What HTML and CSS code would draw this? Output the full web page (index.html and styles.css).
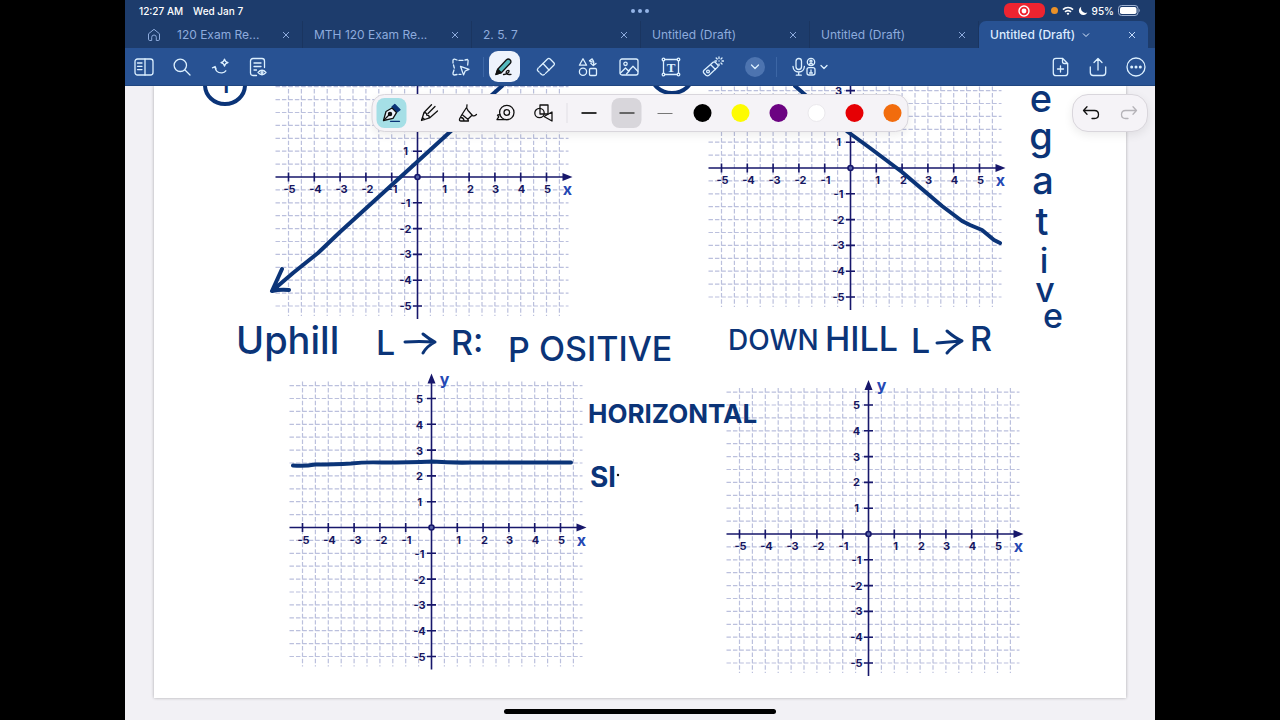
FILE: index.html
```html
<!DOCTYPE html>
<html lang="en">
<head>
	<meta charset="UTF-8">
	<meta name="viewport" content="width=device-width, initial-scale=1.0">
	<title>Untitled (Draft)</title>
	<link rel="stylesheet" href="styles.css">
</head>
<body>
<div class="tablet">
	<header class="top">
		<div class="status">
			<div class="clock"><span>12:27 AM</span><span>Wed Jan 7</span></div>
			<div class="dots"><i></i><i></i><i></i></div>
			<div class="system">
				<span class="recording"><svg width="12" height="12" viewBox="0 0 12 12"><circle cx="6" cy="6" r="5" fill="none" stroke="#fff" stroke-width="1.4"/><circle cx="6" cy="6" r="2.4" fill="#fff"/></svg></span>
				<span class="mic-dot"></span>
				<svg width="12" height="10" viewBox="0 0 12 10" fill="none" stroke="#fff" stroke-width="1.7"><path d="M1 3.6a7 7 0 0 1 10 0M3 5.9a4.200 4.200 0 0 1 6 0"/><path d="M4.600 7.500L6 9.200l1.400-1.700a2 2 0 0 0-2.800 0z" fill="#fff" stroke="none"/></svg>
				<svg width="10" height="10" viewBox="0 0 10 10"><path d="M3.300.8A4.400 4.400 0 1 0 9.300 6.600 4.600 4.600 0 0 1 3.300.8z" fill="#fff"/></svg>
				<span>95%</span>
				<svg width="23" height="11" viewBox="0 0 23 11"><rect x=".5" y=".5" width="19.500" height="10" rx="3" fill="none" stroke="#9fb2d2"/><rect x="2" y="2" width="16.500" height="7" rx="1.800" fill="#fff"/><path d="M21.300 4v3c1-.4 1-2.600 0-3z" fill="#9fb2d2"/></svg>
			</div>
		</div>
		<nav class="tabs">
			<button class="home" aria-label="Home"><svg width="14" height="14" viewBox="0 0 14 14"><path d="M1.500 5.800L7 1.300l5.500 4.500v5.400q0 1.300-1.300 1.300H9.300V9.300a2.300 2.300 0 0 0-4.600 0v3.200H2.800q-1.300 0-1.300-1.300z"/></svg></button>
			<div class="tab"><a href="#">120 Exam Re...</a><button class="close" aria-label="Close tab"><svg width="8" height="8" viewBox="0 0 8 8"><path d="M1 1l6 6M7 1L1 7"/></svg></button></div>
			<div class="tab"><a href="#">MTH 120 Exam Re...</a><button class="close" aria-label="Close tab"><svg width="8" height="8" viewBox="0 0 8 8"><path d="M1 1l6 6M7 1L1 7"/></svg></button></div>
			<div class="tab"><a href="#">2. 5. 7</a><button class="close" aria-label="Close tab"><svg width="8" height="8" viewBox="0 0 8 8"><path d="M1 1l6 6M7 1L1 7"/></svg></button></div>
			<div class="tab"><a href="#">Untitled (Draft)</a><button class="close" aria-label="Close tab"><svg width="8" height="8" viewBox="0 0 8 8"><path d="M1 1l6 6M7 1L1 7"/></svg></button></div>
			<div class="tab"><a href="#">Untitled (Draft)</a><button class="close" aria-label="Close tab"><svg width="8" height="8" viewBox="0 0 8 8"><path d="M1 1l6 6M7 1L1 7"/></svg></button></div>
			<div class="tab active"><a href="#">Untitled (Draft) <svg width="8" height="6" viewBox="0 0 8 6"><path d="M1 1.500l3 3 3-3"/></svg></a><button class="close" aria-label="Close tab"><svg width="8" height="8" viewBox="0 0 8 8"><path d="M1 1l6 6M7 1L1 7"/></svg></button></div>
		</nav>
	</header>

	<div class="toolbar">
		<div class="group">
			<button aria-label="Sidebar"><svg width="20" height="18" viewBox="0 0 20 18"><rect x="1" y="1" width="18" height="16" rx="2.500"/><path d="M11 1v16M3.500 5h4.500M3.500 8.300h4.500M3.500 11.600h4.500"/></svg></button>
			<button aria-label="Search"><svg width="18" height="18" viewBox="0 0 18 18"><circle cx="7.300" cy="7.300" r="6.200"/><path d="M12 12l5 5"/></svg></button>
			<button aria-label="Assistant"><svg width="18" height="18" viewBox="0 0 18 18"><path d="M13.500 1.200q.6 2.900 3.500 3.500-2.900.6-3.500 3.500-.6-2.900-3.500-3.500 2.900-.6 3.500-3.500zM1.500 9.800l2.600-1.300 1 2.600M4 9c.5 4 3.500 6 7 5.800 1.800-.2 3-.9 3.800-2"/></svg></button>
			<button aria-label="Page view"><svg width="18" height="20" viewBox="0 0 18 20"><path d="M7.500 18.500H4q-2.500 0-2.500-2.500V4Q1.500 1.500 4 1.500h9q2.500 0 2.500 2.500v6.500M5 6h7M5 9.500h7M5 13h2.500"/><path d="M9 15.500q4-4.500 8 0-4 4.500-8 0z"/><circle cx="13" cy="15.500" r=".9"/></svg></button>
		</div>
		<div class="middle">
			<button aria-label="Lasso"><svg width="20" height="20" viewBox="0 0 20 20"><path d="M2 6V3.500Q2 2 3.500 2.200L6 3M8 3.400h4M14 3l2.500-.5Q17.500 3 17 5l-.3 3M2.500 8l.8 3M3 13l-1 3q-.2 2 1.500 2l2.500-.5M8 17.300h2"/><path d="M9.500 9.300l8.500 3-3.800 1.700-1.700 3.900z"/></svg></button>
			<span class="line"></span>
			<div class="tools">
				<button class="selected" aria-label="Pen"><svg width="20" height="20" viewBox="0 0 20 20"><path d="M2 17.500l1.700-5.200L12.500 2.800q1.800-1.600 3.500 0t.3 3.500L7.300 15.700z" fill="#55b9be"/><path d="M3.700 12.300l3.600 3.400L2 17.500z" fill="#111"/><path d="M9.500 17.500c3 .2 6-2.300 5.500-3.800-.7-1.200-3.300.4-2.700 2.300.5 2 3 1.600 4.700 1.300"/></svg></button>
				<button aria-label="Eraser"><svg width="20" height="20" viewBox="0 0 20 20"><path d="M7 6.500L11.500 2q1.300-1.200 2.600 0l3.700 3.700q1.200 1.300 0 2.600L13 13z"/><path d="M7 6.500L2 11.300q-1.200 1.400 0 2.700l3.600 3.500q1.400 1.200 2.700 0L13 13" stroke-dasharray="5 1.500"/></svg></button>
				<button aria-label="Shapes"><svg width="20" height="20" viewBox="0 0 20 20"><path d="M5 1.800l3.600 6.400H1.400zM11.500 3.800q1.800-2.300 3.500-.5 1.300 1.500.5 5M12.800 6.200l2.500 2.400 2.700-2.200M11.500 3.800l2.700-1.900M11.500 3.800l2.800 1.300"/><circle cx="5" cy="14.800" r="3.600"/><rect x="11.500" y="11.500" width="7" height="7" rx="1.200"/></svg></button>
				<button aria-label="Image"><svg width="20" height="18" viewBox="0 0 20 18"><rect x="1" y="1" width="18" height="16" rx="2"/><circle cx="6.500" cy="5.800" r="1.700"/><path d="M1.500 15l5-5 3 3 4.500-4.800 4.800 5M7.500 16l3-3.500"/></svg></button>
				<button aria-label="Text"><svg width="20" height="20" viewBox="0 0 20 20"><path d="M4 2.500h12M17.500 4v12M16 17.500H4M2.500 16V4"/><circle cx="2.500" cy="2.500" r="1.300"/><circle cx="17.500" cy="2.500" r="1.300"/><circle cx="2.500" cy="17.500" r="1.300"/><circle cx="17.500" cy="17.500" r="1.300"/><text class="glyph" x="10" y="14.500">T</text></svg></button>
				<button aria-label="Laser pointer"><svg width="22" height="22" viewBox="0 0 22 22"><path d="M8 9l3-2.700q1.200-1 2.400.2l2.200 2.200q1 1.200 0 2.400L7 19.300q-1.500 1.200-3 0L2 17.300q-1.300-1.500 0-3zM8.500 8.500l5 5"/><circle cx="6" cy="15.500" r="1.400"/><path d="M17 1v1.500M17 8v1.500M13 5h1.500M20 5h1.500M14.200 2l1 1M19 7l1 1M20 2l-1 1M17 5h.1"/></svg></button>
				<button aria-label="More tools"><span class="round"><svg width="10" height="8" viewBox="0 0 10 8"><path d="M1.500 2l3.500 3.500L8.500 2"/></svg></span></button>
			</div>
			<span class="line"></span>
			<button class="audio" aria-label="Record audio"><svg width="24" height="20" viewBox="0 0 24 20"><rect x="4" y="1.500" width="5.500" height="11" rx="2.700"/><path d="M1 9.500q.5 5.500 5.700 5.500t5.700-5.500M6.700 15v3.200M4.300 18.200h5"/><circle cx="19" cy="5" r="3.700"/><circle cx="19" cy="4.200" r="1"/><path d="M17 7.500q2-2 4 0M17 10.700h4q2 0 2 2V16q0 2-2 2h-4q-2 0-2-2v-3.300q0-2 2-2zM19 13v3M17.600 16h2.800"/></svg><svg width="8" height="6" viewBox="0 0 8 6"><path d="M1 1.500l3 3 3-3"/></svg></button>
		</div>
		<div class="group right">
			<button aria-label="Add page"><svg width="17" height="20" viewBox="0 0 17 20"><path d="M10.500 1.300H4Q1.300 1.300 1.300 4v12q0 2.700 2.700 2.700h9q2.700 0 2.700-2.700V6.500zM10.500 1.300v3.500q0 1.700 1.700 1.700h3.500M8.500 9v6M5.500 12h6"/></svg></button>
			<button aria-label="Share"><svg width="18" height="20" viewBox="0 0 18 20"><path d="M1.300 10v5.500q0 3 3 3h9.400q3 0 3-3V10M9 13V2M5 5.500l4-4 4 4"/></svg></button>
			<button aria-label="More"><svg width="20" height="20" viewBox="0 0 20 20"><circle cx="10" cy="10" r="9"/><g class="solid"><circle cx="5.700" cy="10" r="1.500"/><circle cx="10" cy="10" r="1.500"/><circle cx="14.300" cy="10" r="1.500"/></g></svg></button>
		</div>
	</div>

	<main class="workspace">
		<div class="sheet">
			<svg class="page" viewBox="154 86 972 612">
				<defs>
					<g id="plane">
						<path class="grid" d="M-142-141.900h293m-293 12.900h293m-293 12.900h293m-293 12.900h293m-293 12.900h293m-293 12.900h293m-293 12.900h293m-293 12.900h293m-293 12.900h293m-293 12.900h293m-293 12.900h293m-293 25.800h293m-293 12.900h293m-293 12.900h293m-293 12.900h293m-293 12.900h293m-293 12.900h293m-293 12.900h293m-293 12.900h293m-293 12.900h293m-293 12.900h293"/>
						<path class="grid" d="M-129-146v285m12.900-285v285m12.900-285v285m12.900-285v285m12.900-285v285m12.900-285v285m12.900-285v285m12.900-285v285m12.900-285v285m12.900-285v285m25.800-285v285m12.900-285v285m12.900-285v285m12.900-285v285m12.900-285v285m12.900-285v285m12.900-285v285m12.900-285v285m12.900-285v285m12.900-285v285m12.900-285v285"/>
						<path class="axis" d="M-142 0H148M0 142V-147"/>
						<path class="axis" d="M-129-4.500v9m25.800-9v9m25.800-9v9m25.800-9v9m25.800-9v9m51.600-9v9m25.800-9v9m25.800-9v9m25.800-9v9m25.800-9v9M-4.500-129h9m-9 25.800h9m-9 25.800h9m-9 25.800h9m-9 25.800h9m-9 51.600h9m-9 25.800h9m-9 25.800h9m-9 25.800h9m-9 25.800h9"/>
						<circle class="axis origin" r="2.500"/>
						<path class="tip" d="M155 0l-10-4v8zM0-154l-4 10h8z"/>
						<g class="number">
							<text x="-128" y="16">-5</text><text x="-102" y="16">-4</text><text x="-76" y="16">-3</text><text x="-50" y="16">-2</text><text x="-25" y="16">-1</text>
							<text x="27" y="16">1</text><text x="53" y="16">2</text><text x="78" y="16">3</text><text x="104" y="16">4</text><text x="130" y="16">5</text>
							<text x="-12" y="-125">5</text><text x="-12" y="-99">4</text><text x="-12" y="-73">3</text><text x="-12" y="-48">2</text><text x="-12" y="-22">1</text>
							<text x="-12" y="30">-1</text><text x="-12" y="56">-2</text><text x="-12" y="81">-3</text><text x="-12" y="107">-4</text><text x="-12" y="133">-5</text>
						</g>
						<text class="name" x="150" y="18">x</text>
						<text class="name" x="13" y="-143">y</text>
					</g>
				</defs>
				<use href="#plane" x="417.500" y="177"/>
				<use href="#plane" x="850.500" y="168"/>
				<use href="#plane" x="431.500" y="527.500"/>
				<use href="#plane" x="868.500" y="534"/>

				<!-- lines drawn with the pen -->
				<g class="ink">
					<ellipse cx="225" cy="85" rx="20" ry="19"/>
					<ellipse cx="672" cy="74" rx="21" ry="19"/>
					<path d="M502 86L451 131 417 162 340 232 318 253 303 265 293 273 272 291M282 269q-5 11-10 22 8-2 17-1"/>
					<path d="M795 86l53 46 22 16 32 24 40 34 20 15 8 4 12 5 12 10 6 3"/>
					<path d="M293 465.500q12 1 22-1 20 0 36-1 14-1.500 30-1 30 0 51-1 20 1.500 40 1h99"/>
					<path class="thin" d="M405 342q14-1 29 0M423 334q6 5 12 8-8 4-12 11"/>
					<path class="thin" d="M937 343q12-1 24-2M947 331q8 7 15 10-9 5-15 12"/>
				</g>

				<!-- written notes -->
				<g class="note">
					<text x="219" y="93" class="s26">1</text>
					<text x="236" y="354" class="s38">Uphill</text>
					<text x="376" y="355" class="s34">L</text>
					<text x="451" y="355" class="s34">R:</text>
					<text x="508" y="362" class="s34">P</text>
					<text x="539" y="361" class="s34">OSITIVE</text>
					<text x="728" y="350" class="s28">DOWN</text>
					<text x="825" y="351" class="s34">HILL</text>
					<text x="911" y="353" class="s34">L</text>
					<text x="970" y="351" class="s34">R</text>
					<g class="heavy">
						<text x="588" y="423" class="s26">HORIZONTAL</text>
						<text x="590" y="487" class="s28">Sl</text>
					</g>
					<g class="down s38">
						<text x="1041" y="112">e</text><text x="1041" y="150">g</text><text x="1043" y="194">a</text><text x="1042" y="235">t</text>
					</g>
					<g class="down s34">
						<text x="1044" y="273">i</text><text x="1045" y="302">v</text><text x="1053" y="328">e</text>
					</g>
				</g>
				<circle class="nib" cx="618" cy="475" r="1.200"/>
			</svg>
		</div>

		<div class="floating pens">
			<button class="chosen" aria-label="Fountain pen"><svg width="20" height="20" viewBox="0 0 20 20"><path class="blue" d="M10.500 4l5 5 3-2.300-5.200-5.300z" fill="#0a3377"/><path d="M2 17.500L4.500 8.500l6-3.500 4.500 4.600-3.500 5.700z" fill="#eef3fc"/><path d="M2.500 17l5-5"/><circle cx="8.500" cy="11" r="1.600" fill="#111"/><path class="blue" d="M9 18.300h9"/></svg></button>
			<button aria-label="Ball pen"><svg width="20" height="20" viewBox="0 0 20 20"><path d="M12 1.800L4.500 9.500 2 17.500l8-2.600 8-7M4.500 9.500q3 .2 2.700 2.700 2.800 0 2.800 2.700M8.500 10.500l7-7M3 14.500l2 2"/></svg></button>
			<button aria-label="Brush pen"><svg width="20" height="20" viewBox="0 0 20 20"><path d="M9.500 1.800q-1 3.200 1 5.700l4.500 5q1.500 1.200 4-1M8.700 5L4.500 11.500l5.800 4.800 4.200-4M4.500 11.500L2 16q-.3 2 1.500 2h7.500l-.7-1.700M3.500 14.500q2.500.2 3 3"/></svg></button>
			<button aria-label="Tape"><svg width="20" height="20" viewBox="0 0 20 20"><circle cx="11.300" cy="9.500" r="7.200"/><circle cx="11.300" cy="9.500" r="2.800"/><path d="M4.500 11.500l-2.500.7 1.200 1.600L1.500 16.700h10"/></svg></button>
			<button aria-label="Shape pen"><svg width="20" height="20" viewBox="0 0 20 20"><rect x="6.500" y="2" width="8" height="9"/><circle cx="6" cy="10" r="4.700"/><path d="M10.500 13.500l8-4.500v9z"/></svg></button>
			<span class="split"></span>
			<button aria-label="Thick"><span class="stroke thick"></span></button>
			<button class="width" aria-label="Medium"><span class="stroke"></span></button>
			<button aria-label="Thin"><span class="stroke fine"></span></button>
			<button aria-label="Black"><span class="swatch black"></span></button>
			<button aria-label="Yellow"><span class="swatch yellow"></span></button>
			<button aria-label="Purple"><span class="swatch purple"></span></button>
			<button aria-label="White"><span class="swatch white"></span></button>
			<button aria-label="Red"><span class="swatch red"></span></button>
			<button aria-label="Orange"><span class="swatch orange"></span></button>
		</div>

		<div class="floating history">
			<button aria-label="Undo"><svg width="18" height="16" viewBox="0 0 18 16"><path d="M5 1.800L1.500 5.500 5 9.200M1.500 5.500h11q4 0 4 4t-4 4H10"/></svg></button>
			<button class="off" aria-label="Redo" disabled><svg width="18" height="16" viewBox="0 0 18 16"><path d="M13 1.800l3.500 3.700L13 9.200M16.500 5.500h-11q-4 0-4 4t4 4H8"/></svg></button>
		</div>
		<div class="home-bar"></div>
	</main>
</div>
</body>
</html>
```
FILE: styles.css
```css
*{
	box-sizing: border-box;
}
body{
	margin: 0;
	padding: 0 125px;
	background: #000;
	font-family: Inter, sans-serif;
}
button{
	margin: 0;
	padding: 0;
	border: 0;
	background: none;
	font: inherit;
	color: inherit;
	cursor: pointer;
	display: flex;
	align-items: center;
	justify-content: center;
}
svg{
	display: block;
	flex: none;
}
.tablet{
	min-height: 100vh;
	display: flex;
	flex-direction: column;
	background: #f2f1f5;
}
.top{
	background: #1d3c6c;
	color: #fff;
}

/* status row */
.status{
	height: 21px;
	padding: 0 14px;
	display: grid;
	grid-template-columns: 1fr auto 1fr;
	align-items: center;
	font-size: 10px;
	font-weight: 500;
}
.clock{
	display: flex;
	gap: 10px;
}
.dots{
	display: flex;
	gap: 3px;
}
.dots i{
	width: 4px;
	height: 4px;
	border-radius: 50%;
	background: #94b4e8;
}
.system{
	display: flex;
	align-items: center;
	justify-content: flex-end;
	gap: 4px;
}
.recording{
	width: 41px;
	height: 15px;
	margin-right: 2px;
	border-radius: 6px;
	background: #ee2430;
	display: flex;
	align-items: center;
	justify-content: center;
}
.mic-dot{
	width: 7px;
	height: 7px;
	border-radius: 50%;
	background: #ec9127;
}

/* document tabs */
.tabs{
	height: 27px;
	padding-right: 7px;
	display: grid;
	grid-template-columns: 41px 137fr 169fr 169fr 169fr 169fr 169fr;
	color: #8dabdd;
	font-size: 12px;
}
.tabs svg{
	fill: none;
	stroke: currentColor;
	stroke-width: 1;
}
.home{
	padding-left: 17px;
}
.tab{
	display: flex;
	align-items: center;
	justify-content: space-between;
	padding: 0 12px 0 11px;
	border-right: 1px solid #1a3560;
}
.tab a{
	color: inherit;
	text-decoration: none;
	white-space: nowrap;
	display: flex;
	align-items: center;
	gap: 7px;
}
.tab.active{
	background: #285293;
	color: #c3dbfb;
	border: 0;
	border-radius: 7px 7px 0 0;
}
.tab.active a{
	color: #dcebff;
	font-weight: 500;
}

/* main toolbar */
.toolbar{
	height: 38px;
	display: grid;
	grid-template-columns: 1fr auto 1fr;
	align-items: center;
	background: #285293;
	border-bottom: 1px solid #204680;
	color: #dcf0ff;
}
.toolbar svg{
	fill: none;
	stroke: currentColor;
	stroke-width: 1.3;
	stroke-linecap: round;
	stroke-linejoin: round;
}
.toolbar .solid{
	fill: currentColor;
	stroke: none;
}
.toolbar .glyph{
	fill: currentColor;
	stroke: none;
	font: bold 13px "Liberation Serif", serif;
	text-anchor: middle;
}
.group{
	display: flex;
}
.group button{
	width: 38px;
	height: 37px;
}
.right{
	justify-content: flex-end;
}
.middle{
	display: flex;
	align-items: center;
}
.middle > button{
	width: 32px;
	height: 32px;
}
.middle .audio{
	width: 51px;
	gap: 4px;
}
.line{
	width: 1px;
	height: 20px;
	margin-left: 6px;
	background: #3c66a5;
}
.tools{
	width: 292px;
	display: grid;
	grid-template-columns: repeat(7, 1fr);
	justify-items: center;
}
.tools button{
	width: 31px;
	height: 31px;
}
.tools + .line{
	margin: 0 8px 0 0;
}
.tools .selected{
	background: #eef3fc;
	border-radius: 9px;
	color: #111;
}
.round{
	width: 20px;
	height: 20px;
	border-radius: 50%;
	background: #4d74b0;
	display: flex;
	align-items: center;
	justify-content: center;
}

/* page area */
.workspace{
	position: relative;
	flex: 1;
	overflow: hidden;
}
.sheet{
	margin: 0 29px;
	background: #fff;
	box-shadow: 0 0 3px rgba(0, 0, 0, 0.3);
}
.page{
	width: 100%;
	height: auto;
}
.home-bar{
	width: 272px;
	height: 5px;
	margin: 11px auto 6px;
	border-radius: 3px;
	background: #000;
}

/* coordinate planes */
.grid{
	fill: none;
	stroke: #bbc0dd;
	stroke-width: 1.2;
	stroke-dasharray: 4.45 2;
}
.axis{
	fill: none;
	stroke: #17176b;
	stroke-width: 1.6;
}
.origin{
	fill: #5560a5;
}
.tip{
	fill: #17176b;
}
.number{
	fill: #17175f;
	font-size: 11px;
	font-weight: 700;
	text-anchor: middle;
}
.name{
	fill: #2448b4;
	font-size: 16px;
	font-weight: 700;
	text-anchor: middle;
}

/* handwriting */
.ink{
	fill: none;
	stroke: #0b3478;
	stroke-width: 4;
	stroke-linecap: round;
	stroke-linejoin: round;
}
.ink .thin{
	stroke-width: 3;
}
.note{
	fill: #0b3478;
	font-family: Inter, sans-serif;
	font-weight: 500;
}
.heavy{
	font-weight: 700;
}
.down{
	text-anchor: middle;
}
.nib{
	fill: #111;
}
.s26{
	font-size: 26px;
}
.s28{
	font-size: 28px;
}
.s34{
	font-size: 34px;
}
.s38{
	font-size: 38px;
}

/* floating bars over the page */
.floating{
	position: absolute;
	top: 8px;
	height: 38px;
	display: flex;
	align-items: center;
	gap: 8px;
	background: #f5f3f7;
	border: 1px solid #d9d6dc;
	border-radius: 13px;
	box-shadow: 0 3px 10px rgba(0, 0, 0, 0.08);
	color: #111;
}
.floating button{
	width: 30px;
	height: 30px;
	border-radius: 8px;
}
.floating svg{
	fill: none;
	stroke: currentColor;
	stroke-width: 1.3;
	stroke-linecap: round;
	stroke-linejoin: round;
}
.pens{
	left: 50%;
	transform: translateX(-50%);
	padding-left: 4px;
}
.pens .chosen{
	background: #a5dfe6;
}
.pens .blue{
	stroke: #0a3377;
}
.pens .width{
	background: #d8d6db;
}
.split{
	width: 1px;
	height: 20px;
	margin-right: -2px;
	background: #e2e0e5;
}
.stroke{
	width: 15px;
	height: 2px;
	background: #666;
}
.thick{
	background: #333;
}
.fine{
	height: 1px;
	background: #777;
}
.swatch{
	width: 18px;
	height: 18px;
	border-radius: 50%;
}
.black{
	background: #000;
}
.yellow{
	background: #fdfb02;
}
.purple{
	background: #6c0382;
}
.white{
	background: #fff;
	border: 1px solid #ebe9ed;
}
.red{
	background: #e60004;
}
.orange{
	background: #f26c0d;
}
.history{
	right: 7px;
	padding: 0 3px;
	border-radius: 16px;
}
.history .off{
	color: #b5b3b8;
}
```
